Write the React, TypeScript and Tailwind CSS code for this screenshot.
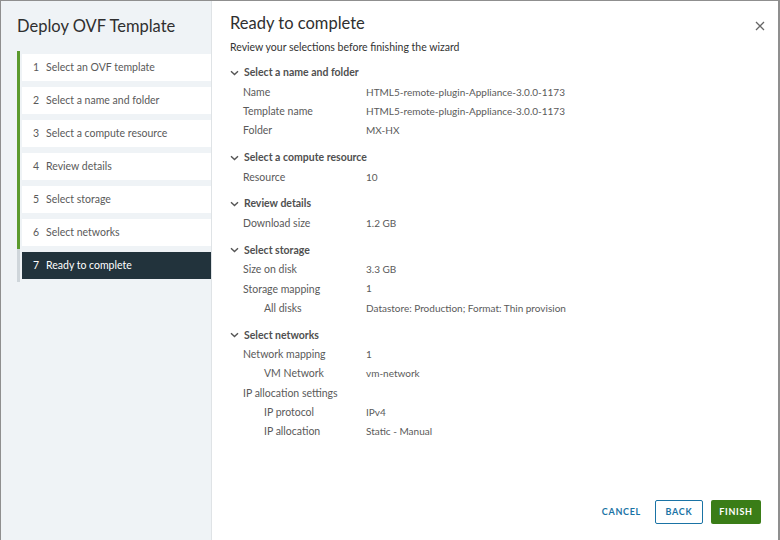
import React from "react";

const steps = [
  "Select an OVF template",
  "Select a name and folder",
  "Select a compute resource",
  "Review details",
  "Select storage",
  "Select networks",
  "Ready to complete",
];

type Row = { label: string; value?: string; indent?: boolean };

const sections: { title: string; rows: Row[] }[] = [
  {
    title: "Select a name and folder",
    rows: [
      { label: "Name", value: "HTML5-remote-plugin-Appliance-3.0.0-1173" },
      { label: "Template name", value: "HTML5-remote-plugin-Appliance-3.0.0-1173" },
      { label: "Folder", value: "MX-HX" },
    ],
  },
  {
    title: "Select a compute resource",
    rows: [{ label: "Resource", value: "10" }],
  },
  {
    title: "Review details",
    rows: [{ label: "Download size", value: "1.2 GB" }],
  },
  {
    title: "Select storage",
    rows: [
      { label: "Size on disk", value: "3.3 GB" },
      { label: "Storage mapping", value: "1" },
      { label: "All disks", value: "Datastore: Production; Format: Thin provision", indent: true },
    ],
  },
  {
    title: "Select networks",
    rows: [
      { label: "Network mapping", value: "1" },
      { label: "VM Network", value: "vm-network", indent: true },
      { label: "IP allocation settings" },
      { label: "IP protocol", value: "IPv4", indent: true },
      { label: "IP allocation", value: "Static - Manual", indent: true },
    ],
  },
];

function Chevron() {
  return (
    <svg width="9" height="6" viewBox="0 0 9 6" className="mr-[5px]">
      <path d="M1 1.2 L4.5 4.6 L8 1.2" fill="none" stroke="#555" strokeWidth="1.4" />
    </svg>
  );
}

export default function App() {
  return (
    <div
      className="w-[780px] h-[540px] flex bg-white border-l border-t border-r-2 border-[#8f8f8f] overflow-hidden text-[#5a5a5a]"
      style={{ fontFamily: "Lato, 'Liberation Sans', sans-serif" }}
    >
      {/* Steps sidebar */}
      <aside className="w-[211px] shrink-0 bg-[#eff3f6] border-r border-[#dfe3e6] flex flex-col">
        <h1 className="pl-[16px] pt-[12px] h-[50px] text-[16.5px] text-[#2f2f2f] leading-[26px]">
          Deploy OVF Template
        </h1>
        <div className="pl-[16px] flex flex-col">
          {steps.map((s, i) => {
            const current = i === steps.length - 1;
            return (
              <div
                key={s}
                className={`border-l-[3px] pl-[2px] pt-[3px] pb-[3px] ${
                  current ? "border-[#cfd6db]" : "border-[#5b9a2e]"
                }`}
              >
                <div
                  className={`h-[27px] flex items-center text-[10.5px] pl-[11px] ${
                    current ? "bg-[#22333c] text-white" : "bg-white"
                  }`}
                >
                  <span className="w-[13px]">{i + 1}</span>
                  <span>{s}</span>
                </div>
              </div>
            );
          })}
        </div>
      </aside>

      {/* Review pane */}
      <main className="flex-1 flex flex-col pl-[18px] pr-[17px]">
        <div className="flex items-start justify-between pt-[9px]">
          <h2 className="text-[16.5px] text-[#2f2f2f] leading-[26px]">Ready to complete</h2>
          <button className="mt-[11px] mr-[-4px]">
            <svg width="10" height="10" viewBox="0 0 10 10">
              <path d="M1 1 L9 9 M9 1 L1 9" stroke="#666" strokeWidth="1.3" />
            </svg>
          </button>
        </div>
        <p className="text-[10.5px] text-[#333] mt-[4px] leading-[14px]">
          Review your selections before finishing the wizard
        </p>

        <div className="flex flex-col mt-[9px]">
          {sections.map((sec, si) => (
            <div key={sec.title} className={si > 0 ? "mt-[7px]" : ""}>
              <div className="h-5 flex items-center text-[10.5px] font-bold text-[#505050]">
                <Chevron />
                {sec.title}
              </div>
              {sec.rows.map((r) => (
                <div key={r.label} className="h-[19.3px] flex items-center text-[10.5px]">
                  <span
                    className={`shrink-0 w-[136px] ${r.indent ? "pl-[34px]" : "pl-[13px]"}`}
                  >
                    {r.label}
                  </span>
                  {r.value && <span className="text-[10px] -mt-[1px]">{r.value}</span>}
                </div>
              ))}
            </div>
          ))}
        </div>

        <div className="mt-auto mb-[16px] flex items-center justify-end gap-2 text-[9px] font-bold tracking-[0.08em]">
          <button className="h-[24px] px-[6px] text-[#1a73a5]">CANCEL</button>
          <button className="h-[24px] w-[48px] border border-[#1a73a5] rounded-[2px] text-[#1a73a5] bg-white">
            BACK
          </button>
          <button className="h-[24px] w-[50px] rounded-[2px] bg-[#3a7d17] text-white">FINISH</button>
        </div>
      </main>
    </div>
  );
}
